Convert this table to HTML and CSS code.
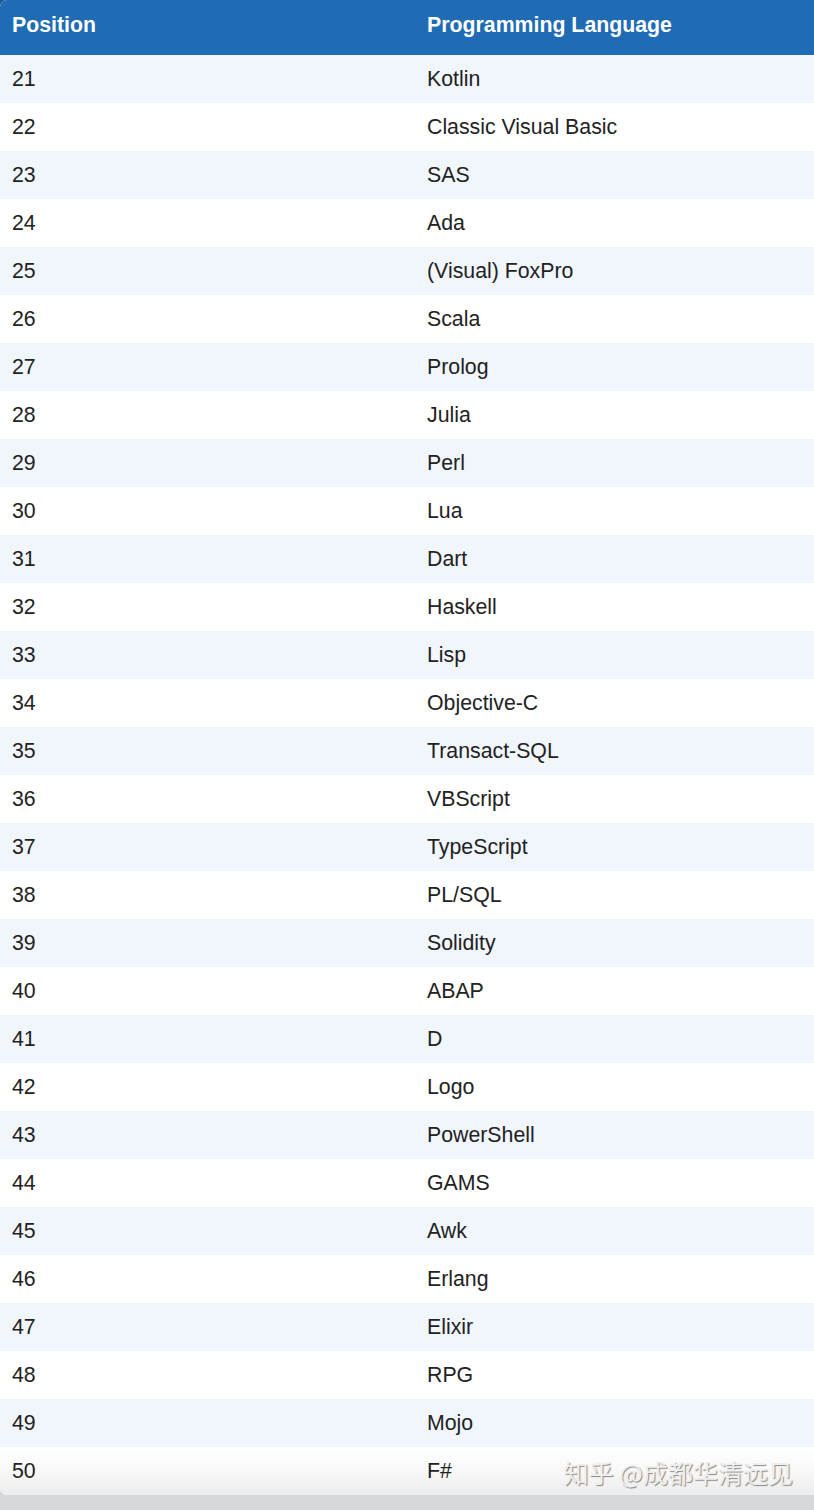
FILE: index.html
```html
<!DOCTYPE html>
<html lang="en">
<head>
<meta charset="utf-8">
<title>Programming Languages 21-50</title>
<link rel="stylesheet" href="styles.css">
</head>
<body>
<div class="page">
  <table class="ranking">
    <colgroup><col class="col-pos"><col class="col-lang"></colgroup>
    <thead>
      <tr><th>Position</th><th>Programming Language</th></tr>
    </thead>
    <tbody>
      <tr><td>21</td><td>Kotlin</td></tr>
      <tr><td>22</td><td>Classic Visual Basic</td></tr>
      <tr><td>23</td><td>SAS</td></tr>
      <tr><td>24</td><td>Ada</td></tr>
      <tr><td>25</td><td>(Visual) FoxPro</td></tr>
      <tr><td>26</td><td>Scala</td></tr>
      <tr><td>27</td><td>Prolog</td></tr>
      <tr><td>28</td><td>Julia</td></tr>
      <tr><td>29</td><td>Perl</td></tr>
      <tr><td>30</td><td>Lua</td></tr>
      <tr><td>31</td><td>Dart</td></tr>
      <tr><td>32</td><td>Haskell</td></tr>
      <tr><td>33</td><td>Lisp</td></tr>
      <tr><td>34</td><td>Objective-C</td></tr>
      <tr><td>35</td><td>Transact-SQL</td></tr>
      <tr><td>36</td><td>VBScript</td></tr>
      <tr><td>37</td><td>TypeScript</td></tr>
      <tr><td>38</td><td>PL/SQL</td></tr>
      <tr><td>39</td><td>Solidity</td></tr>
      <tr><td>40</td><td>ABAP</td></tr>
      <tr><td>41</td><td>D</td></tr>
      <tr><td>42</td><td>Logo</td></tr>
      <tr><td>43</td><td>PowerShell</td></tr>
      <tr><td>44</td><td>GAMS</td></tr>
      <tr><td>45</td><td>Awk</td></tr>
      <tr><td>46</td><td>Erlang</td></tr>
      <tr><td>47</td><td>Elixir</td></tr>
      <tr><td>48</td><td>RPG</td></tr>
      <tr><td>49</td><td>Mojo</td></tr>
      <tr class="last"><td>50</td><td>F#</td></tr>
    </tbody>
  </table>
  <div class="watermark">知乎 @成都华清远见</div>
</div>
</body>
</html>
```

FILE: styles.css
```css
html, body {
  margin: 0;
  padding: 0;
}
body {
  background: linear-gradient(#1a5896 0, #1a5896 20px, #d5d8db 20px);
  font-family: "Liberation Sans", Arial, Helvetica, sans-serif;
  width: 814px;
  height: 1510px;
  overflow: hidden;
}
.page {
  position: relative;
  width: 814px;
  height: 1510px;
}
.ranking {
  width: 814px;
  border-collapse: separate;
  border-spacing: 0;
  table-layout: fixed;
  border-radius: 7px 0 0 7px;
  overflow: hidden;
  background: #ffffff;
}
.col-pos { width: 415px; }
.ranking th {
  background: #1f6bb4;
  color: #ffffff;
  font-weight: bold;
  font-size: 21.3px;
  text-align: left;
  height: 55px;
  padding: 0 12px 5px 12px;
  box-sizing: border-box;
  vertical-align: middle;
}
.ranking td {
  height: 48px;
  padding: 0 12px;
  box-sizing: border-box;
  font-size: 21.3px;
  color: #222222;
  vertical-align: middle;
}
.ranking tbody tr:nth-child(odd) td {
  background: #f1f5fc;
}
.ranking tbody tr.last td {
  background: linear-gradient(#ffffff, #f7f7f7 55%, #ececec);
}
.watermark {
  position: absolute;
  right: 21px;
  top: 1455px;
  font-family: "Noto Sans CJK SC", sans-serif;
  font-size: 25px;
  line-height: 34px;
  color: #efefef;
  text-shadow: 1px 1px 1px rgba(0, 0, 0, 0.45);
}
```
